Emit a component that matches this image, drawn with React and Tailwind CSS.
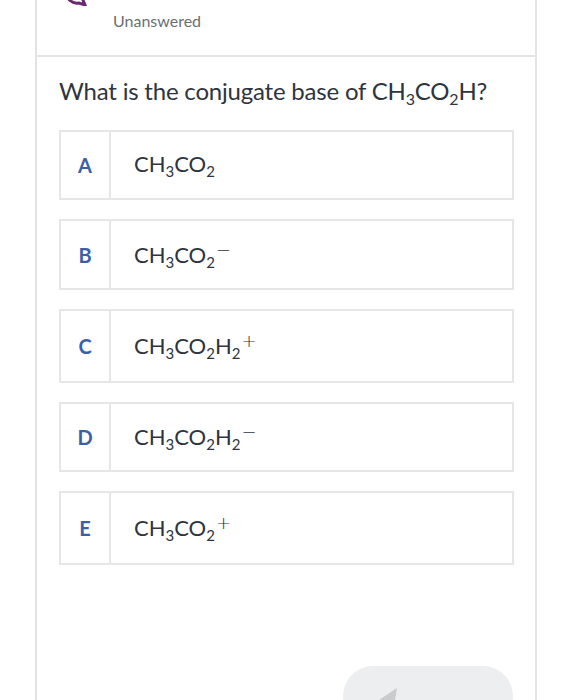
const options = [
  { letter: "A", formula: [["CH"], ["3", "sub"], ["CO"], ["2", "sub"]], h: "h-[70px]" },
  { letter: "B", formula: [["CH"], ["3", "sub"], ["CO"], ["2", "sub"], ["−", "sup"]], h: "h-[71px]" },
  { letter: "C", formula: [["CH"], ["3", "sub"], ["CO"], ["2", "sub"], ["H"], ["2", "sub"], ["+", "sup"]], h: "h-[74px]" },
  { letter: "D", formula: [["CH"], ["3", "sub"], ["CO"], ["2", "sub"], ["H"], ["2", "sub"], ["−", "sup"]], h: "h-[70px]" },
  { letter: "E", formula: [["CH"], ["3", "sub"], ["CO"], ["2", "sub"], ["+", "sup"]], h: "h-[74px]" },
]

function Formula({ parts }) {
  return (
    <span>
      {parts.map(([t, kind], i) => {
        if (kind === "sub") return <span key={i} className="text-[15px] align-[-5px]">{t}</span>
        if (kind === "sup") return <span key={i} className="text-[18px] align-[7px] font-['DejaVu_Sans'] font-extralight pl-[1px]">{t}</span>
        return <span key={i}>{t}</span>
      })}
    </span>
  )
}

export default function App() {
  return (
    <div className="w-[572px] h-[700px] bg-white overflow-hidden" style={{ fontFamily: "'Source Sans Pro', Lato, 'Open Sans', sans-serif" }}>
      <div className="ml-[35px] w-[502px] h-[700px] border-x-2 border-[#e4e4e4] bg-white">
        {/* header */}
        <div className="h-[57px] border-b-2 border-[#e4e4e4] overflow-hidden flex">
          <svg className="ml-[26px] -mt-[14px] shrink-0" width="26" height="20" viewBox="0 0 26 20">
            <path d="M3 4 C3 14 10 18 16 17 L22 19 L20 14 C23 10 22 4 20 2" fill="none" stroke="#6b2a6f" strokeWidth="3" strokeLinecap="round" />
          </svg>
          <div className="pl-[24px] pt-[9px] text-[16px] text-[#6b6f73]">Unanswered</div>
        </div>
        {/* question */}
        <div className="px-[22px] pt-[16px]">
          <div className="text-[24px] text-[#2f3540] tracking-[-0.2px]">
            What is the conjugate base of CH<span className="text-[16px] align-[-5px]">3</span>CO<span className="text-[16px] align-[-5px]">2</span>H?
          </div>
          <div className="mt-[19px] flex flex-col gap-[19px]">
            {options.map(o => (
              <div key={o.letter} className={`flex ${o.h} border-2 border-[#e6e6e6] w-[455px]`}>
                <div className="w-[50px] flex items-center justify-center border-r-2 border-[#e6e6e6] text-[20px] font-bold text-[#3d5fa8]">
                  {o.letter}
                </div>
                <div className="flex items-center pl-[23px] text-[22px] text-[#2f3540]">
                  <Formula parts={o.formula} />
                </div>
              </div>
            ))}
          </div>
          {/* next button */}
          <div className="mt-[101px] ml-[284px] w-[170px] h-[60px] rounded-full bg-[#eceeef] flex pl-[34px] pt-[22px]">
            <svg width="24" height="12" viewBox="0 0 24 12">
              <path d="M2 12 L20 0 L18 12 Z" fill="#c9cbcd" />
            </svg>
          </div>
        </div>
      </div>
    </div>
  )
}
